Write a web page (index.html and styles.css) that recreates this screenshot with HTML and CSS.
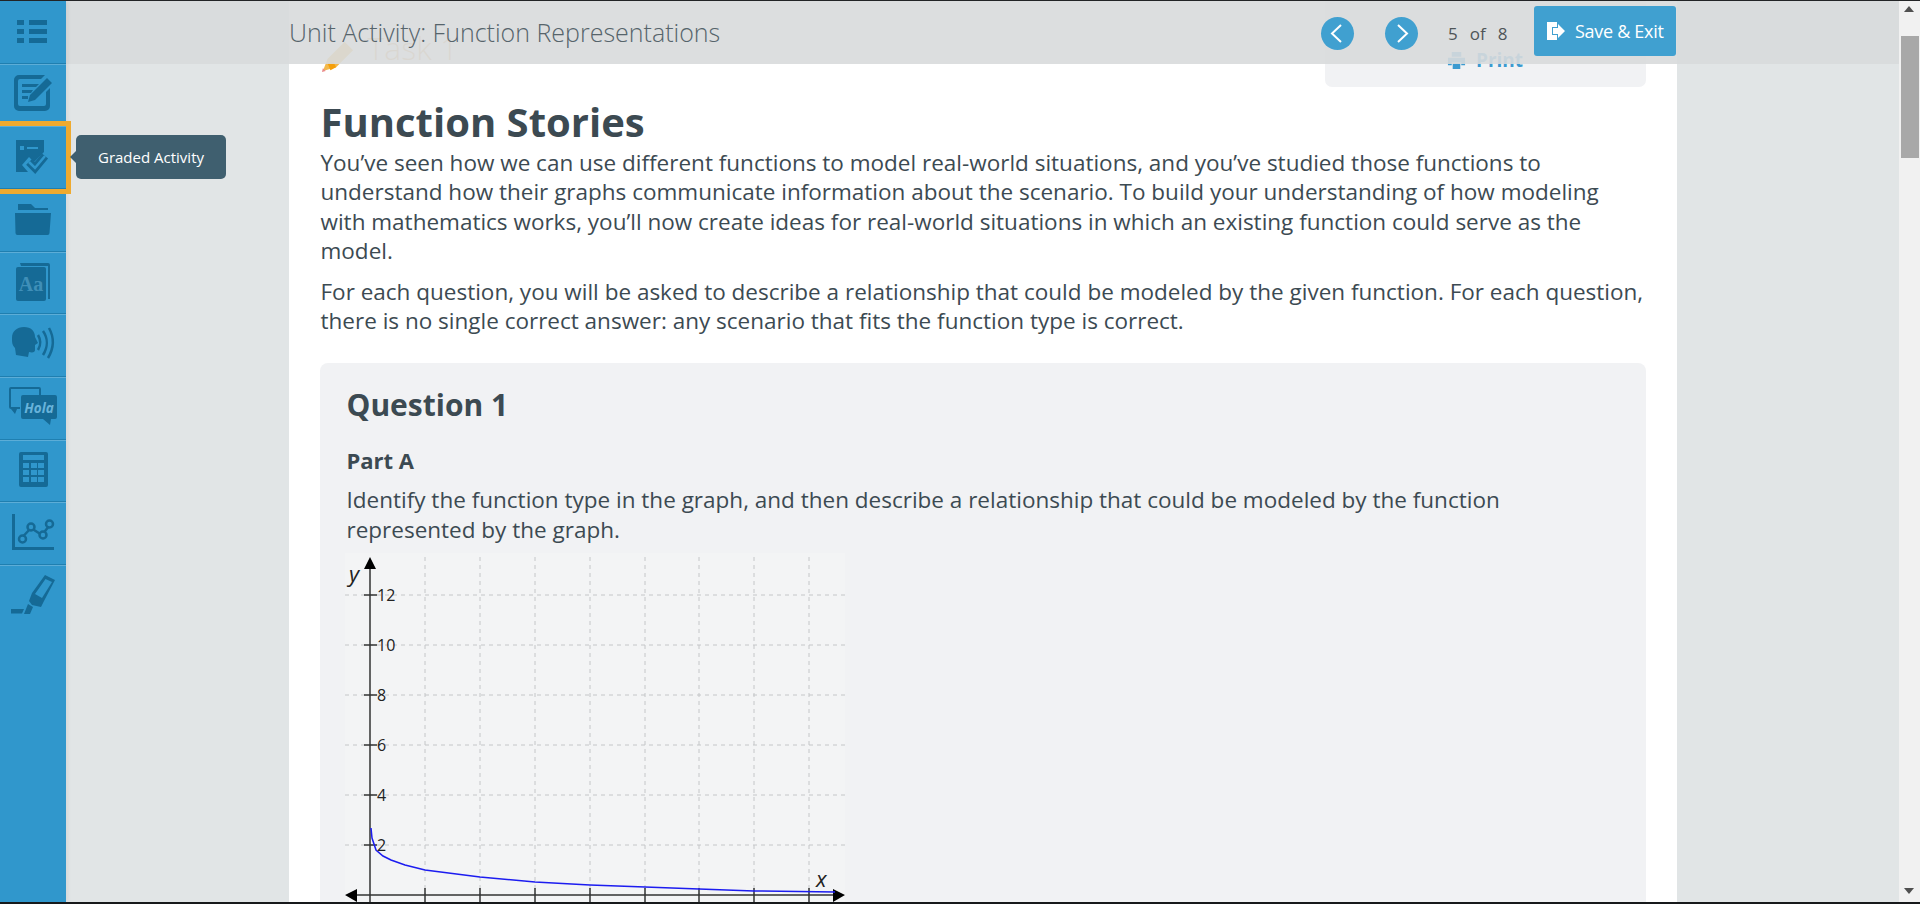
FILE: index.html
```html
<!DOCTYPE html>
<html lang="en">
<head>
<meta charset="utf-8">
<title>Unit Activity: Function Representations</title>
<link rel="stylesheet" href="styles.css">
</head>
<body>
<div class="app">
  <nav class="rail">
    <div class="rail-item">
      <svg class="ico" viewBox="0 0 66 62"><path d="M17 19h7v5h-7zM29 19h18v5H29zM17 28h7v5h-7zM29 28h18v5H29zM17 37h7v5h-7zM29 37h18v5H29z"/></svg>
    </div>
    <div class="rail-item">
      <svg class="ico" viewBox="0 0 66 62"><path fill-rule="evenodd" d="M19 11h26l-4 4H20a2 2 0 0 0-2 2v23a2 2 0 0 0 2 2h24a2 2 0 0 0 2-2V28l4-4v18a5 5 0 0 1-5 5H19a5 5 0 0 1-5-5V16a5 5 0 0 1 5-5z"/><path d="M22 20h17l-3 3H22zM22 26h11l-2 3h-9zM22 32h6v3h-6zM47 14l5 5-17 17-7 2 2-7z"/></svg>
    </div>
    <div class="rail-item focused">
      <svg class="ico" viewBox="0 0 66 62"><path fill-rule="evenodd" d="M16 14h28v12L34 36l-5-5-7 8 6 7H16zM20 20v4h4v-4zM27 21v2h11v-2z"/><path class="chk-out" d="M29 36l6 6 10-12"/><path class="chk-in" d="M29 36l6 6 10-12"/></svg>
    </div>
    <div class="rail-item">
      <svg class="ico" viewBox="0 0 66 62"><path d="M18 15h13l4 4h13v2H18zM15 24h36l-1.500 20a2 2 0 0 1-2 2h-30a2 2 0 0 1-2-2z"/></svg>
    </div>
    <div class="rail-item">
      <svg class="ico" viewBox="0 0 66 62"><path d="M20 11h28a2 2 0 0 1 2 2v34h-2V14H21z"/><path d="M18 15h26a2 2 0 0 1 2 2v30a2 2 0 0 1-2 2H18a2 2 0 0 1-2-2V17a2 2 0 0 1 2-2z"/><text class="aa" x="31" y="39">Aa</text></svg>
    </div>
    <div class="rail-item">
      <svg class="ico" viewBox="0 0 66 62"><g transform="translate(0 12)"><path d="M24 1c7 0 11 4 11 10l3 6-3 2v5c0 2-2 3-6 2l-1 5-12-2-1-7c-3-3-3-6-3-10C12 5 17 1 24 1z"/><path class="wave" d="M38 9c3 5 3 10 0 15M43 5c5 7 5 16 0 24M49 2c5 9 5 20-1 30"/></g></svg>
    </div>
    <div class="rail-item">
      <svg class="ico" viewBox="0 0 66 62"><path fill="none" stroke="#156a96" stroke-width="2" d="M20 31h-9a1 1 0 0 1-1-1V12a1 1 0 0 1 1-1h28a1 1 0 0 1 1 1v6"/><path d="M11 32h6l-2 5zM23 18h32a2 2 0 0 1 2 2v20a2 2 0 0 1-2 2h-4l-1 6-7-6H23a2 2 0 0 1-2-2V20a2 2 0 0 1 2-2z"/><text class="hola" x="39" y="36">Hola</text></svg>
    </div>
    <div class="rail-item">
      <svg class="ico" viewBox="0 0 66 62"><path fill-rule="evenodd" d="M21 12h25a2 2 0 0 1 2 2v31a2 2 0 0 1-2 2H21a2 2 0 0 1-2-2V14a2 2 0 0 1 2-2zM23 15v5h21v-5zM23 23v5h6v-5zM31 23v5h6v-5zM38 23v5h6v-5zM23 30v5h6v-5zM31 30v5h6v-5zM38 30v5h6v-5zM23 37v5h6v-5zM31 37v5h6v-5zM38 37v5h6v-5z"/></svg>
    </div>
    <div class="rail-item">
      <svg class="ico" viewBox="0 0 66 62"><path d="M12 12h3v33h39v3H12z"/><path class="line" d="M22.500 35L31 26l11 7 7-9"/><circle class="dot" cx="22.500" cy="37" r="3.500"/><circle class="dot" cx="31" cy="25" r="3.500"/><circle class="dot" cx="43" cy="33" r="3.500"/><circle class="dot" cx="49.500" cy="22" r="3.500"/></svg>
    </div>
    <div class="rail-item">
      <svg class="ico" viewBox="0 0 66 62"><path fill-rule="evenodd" d="M45 10l10 5-11 21-3 6-9-2-3-4 3-8zM45.500 14L35 29l7 4 10-16z"/><path d="M28 39l5 3-3 7h-6zM11 44h13l-2 4.500H11z"/></svg>
    </div>
  </nav>

  <div class="tooltip">Graded Activity</div>

  <main class="main">
    <header class="topbar">
      <h1 class="unit-title">Unit Activity: Function Representations</h1>
      <div class="pager">
        <button class="round" aria-label="Previous"><svg viewBox="0 0 33 33"><path d="M20 8l-9 8.500 9 8.500"/></svg></button>
        <button class="round" aria-label="Next"><svg viewBox="0 0 33 33"><path d="M13 8l9 8.500-9 8.500"/></svg></button>
        <span class="count"><span>5</span><span>of</span><span>8</span></span>
        <button class="save">
          <svg viewBox="0 0 20 20"><path d="M1 1h10v5H6v8h5v5H1z"/><path d="M7 7h5V3l7 7-7 7v-4H7z"/></svg>
          Save &amp; Exit
        </button>
      </div>
    </header>

    <article class="sheet">
      <div class="task-row">
        <div class="task">
          <svg viewBox="0 0 36 36"><path fill="#f2b84b" d="M2 34l5-13L25 3l9 9-18 18z"/><path fill="#f59f0a" d="M7 26l6-2 3 6-6 3z"/><path fill="#e98a8a" d="M1 35l1-4 3 3z"/></svg>
          <span>Task 1</span>
        </div>
        <div class="print">
          <svg viewBox="0 0 20 20"><path d="M5 1h10v5H5zM1 7h18v8h-4v-3H5v3H1zM6 13h8v6H6z"/></svg>
          <span>Print</span>
        </div>
      </div>
      <h2 class="title">Function Stories</h2>
      <p class="para first">You’ve seen how we can use different functions to model real-world situations, and you’ve studied those functions to understand how their graphs communicate information about the scenario. To build your understanding of how modeling with mathematics works, you’ll now create ideas for real-world situations in which an existing function could serve as the model.</p>
      <p class="para">For each question, you will be asked to describe a relationship that could be modeled by the given function. For each question, there is no single correct answer: any scenario that fits the function type is correct.</p>

      <section class="question">
        <h3 class="q-title">Question 1</h3>
        <h4 class="q-part">Part A</h4>
        <p class="para q-text">Identify the function type in the graph, and then describe a relationship that could be modeled by the function represented by the graph.</p>
        <svg class="graph" viewBox="0 0 500 360">
          <rect width="500" height="360" fill="#f3f4f5"/>
          <g class="grid">
            <path d="M80 4V342M135 4V342M190 4V342M245 4V342M300 4V342M354 4V342M409 4V342M464 4V342"/>
            <path d="M0 42H500M0 92H500M0 142H500M0 192H500M0 242H500M0 292H500"/>
          </g>
          <g class="axes">
            <path d="M25 8V352M8 342H490"/>
            <path d="M19 42H32M19 92H32M19 142H32M19 192H32M19 242H32M19 292H32"/>
            <path d="M80 335V352M135 335V352M190 335V352M245 335V352M300 335V352M354 335V352M409 335V352M464 335V352"/>
          </g>
          <path class="arrow" d="M25 4l-6 12h12zM0 342l12-6v13zM500 342l-12-6v13z"/>
          <path class="curve" d="M26 275L27 285 31 297 38 303 46 307 60 312 80 317 135 324 190 329 245 332 300 334 354 336 409 338 490 339"/>
          <g class="labels">
            <text x="32" y="48">12</text>
            <text x="32" y="98">10</text>
            <text x="32" y="148">8</text>
            <text x="32" y="198">6</text>
            <text x="32" y="248">4</text>
            <text x="32" y="298">2</text>
            <text class="var" x="4" y="29">y</text>
            <text class="var" x="471" y="334">x</text>
          </g>
        </svg>
      </section>
    </article>
  </main>

  <aside class="scrollbar">
    <div class="sb-up"></div>
    <div class="sb-thumb"></div>
    <div class="sb-down"></div>
  </aside>
</div>
</body>
</html>
```

FILE: styles.css
```css
* { box-sizing: border-box; }
html, body { margin: 0; height: 100%; overflow: hidden; }
body {
  font-family: "Open Sans", "Liberation Sans", sans-serif;
  color: #3c4a52;
  background: #e1e5e6;
}
.app {
  display: grid;
  grid-template-columns: 66px 1fr 21px;
  height: 904px;
  border-top: 1px solid #222426;
  border-bottom: 2px solid #17191b;
  position: relative;
  overflow: hidden;
}

/* Left rail */
.rail {
  background: #3097cc;
  box-shadow: 2px 0 4px rgba(0,0,0,.06);
  position: relative;
  z-index: 3;
}
.rail-item {
  height: 62.67px;
  border-bottom: 1px solid #1f7fb0;
  box-shadow: 0 1px 0 #5cadd7;
  position: relative;
}
.rail-item:last-child { border-bottom: 0; box-shadow: none; }
.rail-item.focused { outline: 5px solid #eeaa2f; z-index: 2; }
.ico { display: block; width: 66px; height: 62px; fill: #156a96; overflow: visible; }
.aa { font: bold 20px "Liberation Serif", serif; fill: #3f8fb8; text-anchor: middle; }
.hola { font: italic bold 13.500px "Open Sans", sans-serif; fill: #68b3da; text-anchor: middle; }
.wave, .line { fill: none; stroke: #156a96; stroke-width: 2.500; }
.dot { fill: #3097cc; stroke: #156a96; stroke-width: 2.500; }
.chk-out, .chk-in { fill: none; stroke-linecap: butt; stroke-linejoin: miter; }
.chk-out { stroke: #156a96; stroke-width: 8px; }
.chk-in { stroke: #3097cc; stroke-width: 2.500px; }

.tooltip {
  position: absolute;
  left: 76px;
  top: 134px;
  width: 150px;
  height: 44px;
  background: #3f5f6f;
  border-radius: 5px;
  color: #fff;
  font-size: 15px;
  display: flex;
  align-items: center;
  justify-content: center;
  z-index: 5;
}
.tooltip::before {
  content: "";
  position: absolute;
  left: -6px;
  top: 16px;
  border: 6px solid transparent;
  border-left: 0;
  border-right-color: #3f5f6f;
}

/* Main */
.main { position: relative; overflow: hidden; min-width: 0; }
.topbar {
  position: absolute;
  inset: 0 0 auto 0;
  height: 63px;
  background: rgba(216,218,219,.9);
  padding-left: 223px;
  display: flex;
  align-items: center;
  z-index: 2;
}
.unit-title {
  margin: 0;
  font-size: 25px;
  font-weight: 300;
  color: #56646b;
  line-height: 1;
  width: 1032px;
  flex: none;
}
.pager { display: flex; align-items: center; height: 100%; }
.round {
  width: 33px; height: 33px;
  padding: 0; border: 0; border-radius: 50%;
  background: #40a0d0;
  margin-right: 31px;
  margin-top: 1px;
}
.round svg { display: block; width: 33px; height: 33px; fill: none; stroke: #fff; stroke-width: 2; }
.count {
  display: flex; gap: 12px;
  width: 86px;
  margin-left: -1px;
  font-size: 17px;
  color: #4f5558;
  margin-top: 1px;
}
.save {
  display: flex;
  align-items: center;
  gap: 9px;
  width: 142px;
  height: 50px;
  margin-top: -3px;
  padding: 0 0 0 12px;
  border: 0;
  border-radius: 3px;
  background: #40a0d0;
  color: #fff;
  font: 18px "Open Sans", sans-serif;
  letter-spacing: -.3px;
}
.save svg { width: 20px; height: 20px; fill: #fff; flex: none; }

/* Sheet */
.sheet {
  width: 1388px;
  height: 1200px;
  margin: 0 auto;
  background: #fff;
  padding: 0 31px 0 32px;
}
.task-row { display: flex; justify-content: space-between; height: 86px; }
.task { display: flex; align-items: flex-start; padding-top: 38px; }
.task svg { width: 34px; height: 34px; flex: none; }
.task span { font-size: 32px; font-weight: 300; line-height: 34px; margin-left: 13px; margin-top: -8px; color: #e2b070; }
.print {
  width: 321px;
  background: #f1f2f4;
  border-radius: 0 0 7px 7px;
  display: flex;
  gap: 10px;
  align-items: center;
  justify-content: center;
  padding-top: 32px;
}
.print svg { width: 19px; height: 19px; fill: #3b9ad0; }
.print span { font-size: 19px; font-weight: 700; color: #3b9ad0; }

.title {
  margin: 12px 0 0;
  font-size: 40px;
  line-height: 46px;
  font-weight: 700;
  color: #3c4a52;
}
.para { margin: 0 0 12px; font-size: 22.500px; line-height: 29.400px; color: #3c4a52; }
.para.first { margin: 3px 0 11px; }

.question {
  margin: 28px 0 0 -1px;
  min-height: 700px;
  background: #f1f2f4;
  border-radius: 8px;
  padding: 24px 26px 0 27px;
}
.q-title { margin: 0; font-size: 30px; line-height: 36px; font-weight: 700; color: #3c4a52; }
.q-part { margin: 22px 0 0; font-size: 22px; line-height: 30px; font-weight: 700; color: #3c4a52; }
.q-text { margin: 10px 0 0; }
.graph { display: block; width: 500px; height: 360px; margin: 9px 0 0 -2px; }
.grid path { fill: none; stroke: #c4c6c8; stroke-width: 1; stroke-dasharray: 4 4; }
.axes path { fill: none; stroke: #333; stroke-width: 1.500; }
.arrow { fill: #000; }
.curve { fill: none; stroke: #1c1cf0; stroke-width: 1.500; }
.labels text { font: 16px "Open Sans", sans-serif; fill: #222; }
.labels .var { font: italic 22px "Open Sans", sans-serif; }

/* Scrollbar */
.scrollbar {
  background: #f1f1f1;
  display: flex;
  flex-direction: column;
  align-items: center;
  position: relative;
}
.sb-up, .sb-down { width: 0; height: 0; border: 5px solid transparent; position: absolute; left: 5px; }
.sb-up { top: 5px; border-bottom: 6px solid #505050; border-top: 0; }
.sb-down { bottom: 8px; border-top: 6px solid #505050; border-bottom: 0; }
.sb-thumb { width: 18px; height: 122px; margin-top: 35px; margin-left: 1px; background: #a8a8a8; }
```
